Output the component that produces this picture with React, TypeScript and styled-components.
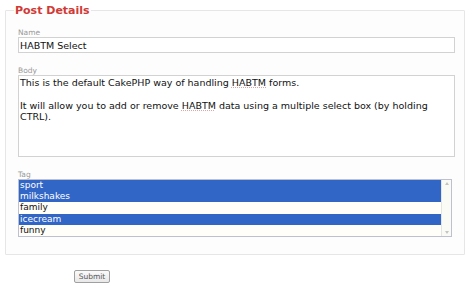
import React from 'react';
import styled, { createGlobalStyle } from 'styled-components';

const GlobalStyle = createGlobalStyle`
  html, body {
    margin: 0;
    padding: 0;
    background: #ffffff;
  }
  body {
    font-family: 'DejaVu Sans', Verdana, sans-serif;
    color: #222;
  }
`;

const Page = styled.div`
  width: 474px;
  height: 288px;
  padding: 4px 0 0 5px;
  box-sizing: border-box;
  overflow: hidden;
`;

const Fieldset = styled.fieldset`
  width: 460px;
  box-sizing: border-box;
  margin: 0;
  padding: 11px 8px 17px 12px;
  border: 1px solid #e6e6e6;
  border-radius: 1px;
  background: #fdfdfd;
  min-width: 0;
`;

const Legend = styled.legend`
  margin-left: -4px;
  padding: 0 1px;
  font-size: 11px;
  line-height: 13px;
  font-weight: bold;
  color: #d03a36;
`;

const Field = styled.div<{ $gap?: number }>`
  display: flex;
  flex-direction: column;
  margin-top: ${(p) => p.$gap ?? 0}px;
`;

const Label = styled.label`
  font-size: 7.5px;
  line-height: 9px;
  color: #9a9a9a;
`;

const TextInput = styled.input`
  width: 437px;
  height: 16px;
  box-sizing: border-box;
  margin: 0;
  padding: 0 1px;
  border: 1px solid #d2d2d2;
  background: #fff;
  font-family: 'DejaVu Sans', Verdana, sans-serif;
  font-size: 9.5px;
  color: #111;
  outline: none;
`;

const TextArea = styled.div`
  width: 437px;
  height: 82px;
  box-sizing: border-box;
  padding: 1px 1px;
  border: 1px solid #d2d2d2;
  background: #fff;
  font-size: 9.5px;
  line-height: 11.5px;
  color: #111;
  white-space: pre-wrap;
  overflow: hidden;
`;

const Misspelled = styled.span`
  text-decoration: underline dotted #e6a3a3;
  text-decoration-thickness: 1px;
  text-underline-offset: 1px;
`;

const ListBox = styled.div`
  width: 434px;
  box-sizing: border-box;
  display: flex;
  border: 1px solid #bcc0d0;
  background: #fffef8;
`;

const Options = styled.div`
  flex: 1;
  display: flex;
  flex-direction: column;
`;

const Option = styled.div<{ $selected?: boolean }>`
  height: 11.4px;
  line-height: 11.4px;
  padding-left: 1px;
  font-size: 9px;
  color: ${(p) => (p.$selected ? '#ffffff' : '#111')};
  background: ${(p) => (p.$selected ? '#3266c6' : 'transparent')};
`;

const Scrollbar = styled.div`
  width: 9px;
  display: flex;
  flex-direction: column;
  justify-content: space-between;
  align-items: center;
  padding: 2px 0;
  border-left: 1px solid #e4e4e4;
  background: #fbfbf6;
`;

const Arrow = styled.div<{ $down?: boolean }>`
  width: 0;
  height: 0;
  border-left: 2.5px solid transparent;
  border-right: 2.5px solid transparent;
  ${(p) =>
    p.$down
      ? 'border-top: 3px solid #c4c4c4;'
      : 'border-bottom: 3px solid #c4c4c4;'}
`;

const Actions = styled.div`
  padding: 9px 0 0 69px;
`;

const SubmitButton = styled.button`
  width: 36px;
  height: 13px;
  padding: 0;
  margin: 0;
  border: 1px solid #a0a0a0;
  border-radius: 2px;
  background: linear-gradient(#fafafa, #e8e8e8);
  font-family: 'DejaVu Sans', Verdana, sans-serif;
  font-size: 7.5px;
  line-height: 11px;
  color: #555;
`;

const tags = [
  { name: 'sport', selected: true },
  { name: 'milkshakes', selected: true },
  { name: 'family', selected: false },
  { name: 'icecream', selected: true },
  { name: 'funny', selected: false },
];

const App = () => {
  return (
    <>
      <GlobalStyle />
      <Page>
        <Fieldset>
          <Legend>Post Details</Legend>
          <Field>
            <Label>Name</Label>
            <TextInput defaultValue="HABTM Select" />
          </Field>
          <Field $gap={12.5}>
            <Label>Body</Label>
            <TextArea role="textbox">
              This is the default CakePHP way of handling <Misspelled>HABTM</Misspelled> forms.
              {'\n\n'}
              It will allow you to add or remove <Misspelled>HABTM</Misspelled> data using a multiple select box (by holding CTRL).
            </TextArea>
          </Field>
          <Field $gap={13}>
            <Label>Tag</Label>
            <ListBox role="listbox" aria-multiselectable="true">
              <Options>
                {tags.map((tag) => (
                  <Option key={tag.name} role="option" $selected={tag.selected} aria-selected={tag.selected}>
                    {tag.name}
                  </Option>
                ))}
              </Options>
              <Scrollbar>
                <Arrow />
                <Arrow $down />
              </Scrollbar>
            </ListBox>
          </Field>
        </Fieldset>
        <Actions>
          <SubmitButton type="submit">Submit</SubmitButton>
        </Actions>
      </Page>
    </>
  );
};

export default App;
